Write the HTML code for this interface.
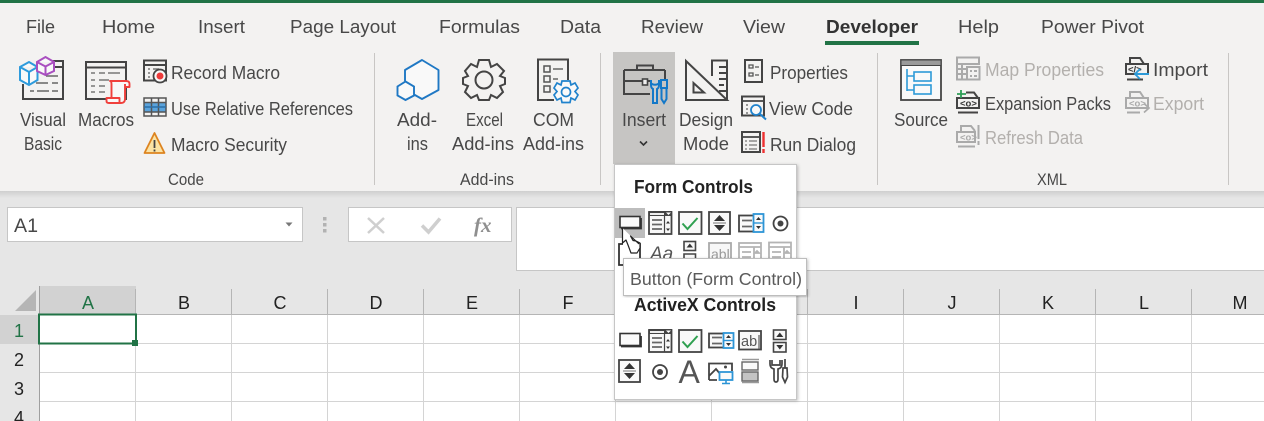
<!DOCTYPE html>
<html><head><meta charset="utf-8"><title>Excel Developer Ribbon</title>
<style>
html,body{margin:0;padding:0;width:1264px;height:421px;overflow:hidden;background:#e6e6e6}
svg{display:block}
text{font-family:"Liberation Sans",sans-serif;font-size:18.5px;fill:#484848;}
.g{fill:#b3b0ad}
.s{font-size:16.5px;fill:#484848}
.b{font-weight:bold;fill:#222;font-size:18px}
.h{fill:#222;font-size:18px}
.d{stroke:#444;stroke-width:2;fill:none}
.y{stroke:#aaa;stroke-width:2;fill:none}
</style></head><body>
<svg width="1264" height="421" viewBox="0 0 1264 421" xmlns="http://www.w3.org/2000/svg">
<defs>
<linearGradient id="sh" x1="0" y1="0" x2="0" y2="1"><stop offset="0" stop-color="#cfcfcf"/><stop offset="1" stop-color="#e6e6e6"/></linearGradient>
<filter id="ms" x="-5%" y="-5%" width="110%" height="110%"><feDropShadow dx="1" dy="1" stdDeviation="1.5" flood-color="#000" flood-opacity=".25"/></filter>
</defs>
<rect width="1264" height="421" fill="#e6e6e6"/>
<rect width="1264" height="191" fill="#f3f2f1"/>
<rect y="191" width="1264" height="7" fill="url(#sh)"/>
<rect width="1264" height="3" fill="#217346"/>

<!-- tabs -->
<text x="26" y="33" textLength="29" lengthAdjust="spacingAndGlyphs">File</text>
<text x="102" y="33" textLength="53" lengthAdjust="spacingAndGlyphs">Home</text>
<text x="198" y="33" textLength="47" lengthAdjust="spacingAndGlyphs">Insert</text>
<text x="290" y="33" textLength="106" lengthAdjust="spacingAndGlyphs">Page Layout</text>
<text x="439" y="33" textLength="81" lengthAdjust="spacingAndGlyphs">Formulas</text>
<text x="560" y="33" textLength="41" lengthAdjust="spacingAndGlyphs">Data</text>
<text x="641" y="33" textLength="62" lengthAdjust="spacingAndGlyphs">Review</text>
<text x="743" y="33" textLength="42" lengthAdjust="spacingAndGlyphs">View</text>
<text x="826" y="33" textLength="92" lengthAdjust="spacingAndGlyphs" style="font-weight:bold;fill:#333">Developer</text>
<rect x="825" y="41" width="94" height="4" fill="#217346"/>
<text x="958" y="33" textLength="41" lengthAdjust="spacingAndGlyphs">Help</text>
<text x="1041" y="33" textLength="103" lengthAdjust="spacingAndGlyphs">Power Pivot</text>

<!-- separators -->
<g fill="#c8c6c4"><rect x="374" y="53" width="1" height="132"/><rect x="600" y="53" width="1" height="132"/><rect x="877" y="53" width="1" height="132"/><rect x="1228" y="53" width="1" height="132"/></g>

<!-- Insert highlight -->
<rect x="613" y="52" width="62" height="112" fill="#c6c5c3"/>

<!-- Code group text -->
<text x="20" y="126" textLength="46" lengthAdjust="spacingAndGlyphs">Visual</text>
<text x="24" y="150" textLength="38" lengthAdjust="spacingAndGlyphs">Basic</text>
<text x="78" y="126" textLength="56" lengthAdjust="spacingAndGlyphs">Macros</text>
<text x="171" y="79" textLength="109" lengthAdjust="spacingAndGlyphs">Record Macro</text>
<text x="171" y="115" textLength="182" lengthAdjust="spacingAndGlyphs">Use Relative References</text>
<text x="171" y="151" textLength="116" lengthAdjust="spacingAndGlyphs">Macro Security</text>
<text class="s" x="168" y="185" textLength="36" lengthAdjust="spacingAndGlyphs">Code</text>

<!-- Add-ins group text -->
<text x="397" y="126" textLength="40" lengthAdjust="spacingAndGlyphs">Add-</text>
<text x="407" y="150" textLength="21" lengthAdjust="spacingAndGlyphs">ins</text>
<text x="466" y="126" textLength="37" lengthAdjust="spacingAndGlyphs">Excel</text>
<text x="452" y="150" textLength="62" lengthAdjust="spacingAndGlyphs">Add-ins</text>
<text x="533" y="126" textLength="41" lengthAdjust="spacingAndGlyphs">COM</text>
<text x="523" y="150" textLength="61" lengthAdjust="spacingAndGlyphs">Add-ins</text>
<text class="s" x="460" y="185" textLength="54" lengthAdjust="spacingAndGlyphs">Add-ins</text>

<!-- Controls text -->
<text x="622" y="126" textLength="44" lengthAdjust="spacingAndGlyphs">Insert</text>
<path d="M640 141.500l3.500 3.500 3.500-3.500" stroke="#333" stroke-width="1.600" fill="none"/>
<text x="679" y="126" textLength="54" lengthAdjust="spacingAndGlyphs">Design</text>
<text x="683" y="150" textLength="46" lengthAdjust="spacingAndGlyphs">Mode</text>
<text x="770" y="79" textLength="78" lengthAdjust="spacingAndGlyphs">Properties</text>
<text x="769" y="115" textLength="84" lengthAdjust="spacingAndGlyphs">View Code</text>
<text x="770" y="151" textLength="86" lengthAdjust="spacingAndGlyphs">Run Dialog</text>

<!-- XML text -->
<text x="894" y="126" textLength="54" lengthAdjust="spacingAndGlyphs">Source</text>
<text class="g" x="985" y="76" textLength="119" lengthAdjust="spacingAndGlyphs">Map Properties</text>
<text x="985" y="110" textLength="126" lengthAdjust="spacingAndGlyphs">Expansion Packs</text>
<text class="g" x="985" y="144" textLength="98" lengthAdjust="spacingAndGlyphs">Refresh Data</text>
<text x="1153" y="76" textLength="55" lengthAdjust="spacingAndGlyphs">Import</text>
<text class="g" x="1153" y="110" textLength="51" lengthAdjust="spacingAndGlyphs">Export</text>
<text class="s" x="1037" y="185" textLength="30" lengthAdjust="spacingAndGlyphs">XML</text>

<!-- Visual Basic icon -->
<path class="d" d="M52 61H63V99H23V84"/><path d="M54 67H62" stroke="#444" stroke-width="2"/>
<path d="M36 83h12M52 83h6M46 76h12M30 91h4M37 91h12M52 91h6" stroke="#666" stroke-width="1.600" fill="none"/>
<path d="M20 67L29 62L37.500 67V80L29 85L20 80ZM20 67L29 72L37.500 67M29 72V85" stroke="#2e9bdc" stroke-width="2" fill="#f9f9f9"/>
<path d="M37 62L45.500 57L54 62V71L45.500 75L37 71ZM37 62L45.500 66.500L54 62M45.500 66.500V75" stroke="#a94fc0" stroke-width="2" fill="#f9f9f9"/>

<!-- Macros icon -->
<rect class="d" x="86" y="62" width="40" height="37"/><path d="M86 67.500H126" stroke="#444" stroke-width="2"/>
<path d="M91 73h4M99 73h6M108 73h12M91 80h4M99 80h10M91 86h4M99 86h6M91 92h4M99 92h6" stroke="#777" stroke-width="1.600"/>
<path d="M110 81H126Q129.500 81 129.500 84V87H125V99Q125 103 121 103H109Q106.500 103 106.500 101V98H111.500V84Q111.500 81 110 81ZM111.500 98H119.500V102.500M125 84V87" stroke="#f0403c" stroke-width="1.900" fill="#f8f8f8" stroke-linejoin="round"/>

<!-- Record Macro icon -->
<rect class="d" x="144" y="60.500" width="22" height="20"/><path d="M144 65H166" stroke="#444" stroke-width="2"/>
<path d="M148 69h2M153 69h6M148 73h2M148 77h2" stroke="#777" stroke-width="1.400"/>
<circle cx="160" cy="76" r="6.500" fill="#f8f8f8" stroke="#444" stroke-width="1.800"/><circle cx="160" cy="76" r="3.500" fill="#ee3b3b"/>

<!-- relative ref -->
<rect x="144" y="102" width="22" height="10" fill="#5aa3dc"/>
<path d="M144 98H166V116H144ZM144 112H166M151.500 98V116M158.500 98V116M144 102.500H166" stroke="#555" stroke-width="1.500" fill="none"/>
<path d="M144 107H166" stroke="#2a6fa8" stroke-width="1.500"/>

<!-- warning -->
<path d="M154.500 133L144.500 153H164.500Z" fill="#fbe3a4" stroke="#dd8420" stroke-width="1.800" stroke-linejoin="round"/>
<path d="M154.500 140V148M154.500 149.500V151.500" stroke="#444" stroke-width="1.800"/>

<!-- Add-ins hexagon -->
<path d="M405 81V70L422 60L438.500 70V90L422 99L414 94.500" stroke="#1f78c4" stroke-width="1.900" fill="#f9f9f9" stroke-linejoin="round"/>
<path d="M405.500 81.500L414 86.500V95.500L405.500 100L397.500 95.500V86.500Z" stroke="#1f78c4" stroke-width="1.900" fill="#f9f9f9"/>

<!-- Gear -->
<path class="d" stroke-width="1.800" d="M479 60H489L491 67L497 64L504 71L500 76L505 78V84L500 86L503 92L497 98L491 95L489 100H479L477 95L471 98L465 92L468 86L463 84V78L468 76L465 71L471 64L477 67Z"/>
<circle cx="484" cy="80" r="8.500" class="d" stroke-width="1.800"/>

<!-- COM -->
<path class="d" d="M568 80V59.500H538V100H554" stroke-width="1.800"/>
<path d="M544 66h6v6h-6zM544 76h6v6h-6zM544 86h6v6h-6z" stroke="#555" stroke-width="1.500" fill="none"/>
<path d="M553 69h10M553 79h5" stroke="#666" stroke-width="1.600"/>
<path fill="#f9f9f9" stroke="#1f82cc" stroke-width="1.700" d="M562 81H570L571 85L575 83L578 88L575 91.500L578 95L575 100L571 98L570 102.500H562L561 98L557 100L554 95L557 91.500L554 88L557 83L561 85Z"/>
<circle cx="566" cy="92" r="4.500" fill="none" stroke="#1f82cc" stroke-width="1.700"/>

<!-- Insert toolbox -->
<path class="d" d="M624 70H665M624 70V94H650M665 70V79M624 81H642M647 81H650M637 70V65.500H653V70" stroke-width="1.800"/>
<rect x="642.500" y="79" width="5" height="6" fill="#eee" stroke="#444" stroke-width="1.600"/>
<path d="M651 80V85Q651 88 653 89V103H657V89Q659 88 659 85V80M651 83.500Q655 86 659 83.500" fill="#cfd9e0" fill-opacity=".4" stroke="#1378c8" stroke-width="2"/>
<path d="M661 80H667V88H661ZM661.500 88V99L664 103L666.500 99V88" fill="none" stroke="#1378c8" stroke-width="2"/>

<!-- Design Mode -->
<path class="d" d="M686 61V100H727ZM693.500 83V92.500H704Z" stroke-width="1.800"/>
<path class="d" stroke-width="1.800" d="M712 76V60.500H727V100M719 67h8M719 73h8M719 79h8M719 85h5M719 91h8"/>

<!-- Properties -->
<rect class="d" x="745" y="60" width="17" height="22" stroke-width="1.800"/><path d="M749 65h4v3h-4zM749 73h4v3h-4zM755 67h4M755 75h4" stroke="#555" stroke-width="1.300" fill="none"/>

<!-- View code -->
<rect class="d" x="742" y="96.500" width="22" height="19" stroke-width="1.800"/><path d="M742 101H764" stroke="#444" stroke-width="1.800"/>
<path d="M746 105h2M746 109h2M746 113h2" stroke="#777" stroke-width="1.400"/>
<circle cx="756" cy="110" r="5" fill="#f8f8f8" stroke="#1f82cc" stroke-width="1.800"/><path d="M760 114l6 5.500" stroke="#1f82cc" stroke-width="2"/>

<!-- Run dialog -->
<rect class="d" x="742" y="132" width="18" height="20" stroke-width="1.800"/><path d="M742 137H760" stroke="#444" stroke-width="1.800"/>
<path d="M745 141h2M749 141h8M745 145h2M749 145h8M745 149h2M749 149h8" stroke="#777" stroke-width="1.300"/>
<path d="M763.500 132V147M763.500 149V153" stroke="#ee3030" stroke-width="2.400"/>

<!-- Source -->
<rect x="901" y="60" width="40" height="40" fill="#f9f9f9" stroke="#444" stroke-width="1.800"/>
<rect x="901" y="60" width="40" height="5.500" fill="#9a9a9a" stroke="#444" stroke-width="1"/>
<path d="M907 69V91M907 76H914M907 90H914" stroke="#2d9ad8" stroke-width="1.600" fill="none"/>
<rect x="914" y="72" width="17" height="9" fill="none" stroke="#2d9ad8" stroke-width="1.600"/>
<rect x="914" y="85" width="17" height="9" fill="none" stroke="#2d9ad8" stroke-width="1.600"/>

<!-- Map props -->
<path class="y" stroke-width="1.600" d="M957 57.500H979V64H957ZM957 64V79.500H967M957 69H967M957 74H967M962 64V79.500"/>
<rect class="y" x="967" y="67" width="12.500" height="12.500" stroke-width="1.500"/>
<path d="M970 70h2v2h-2zM970 75h2v2h-2zM974 70h3v2h-3zM974 75h3v2h-3z" fill="#aaa"/>

<!-- Expansion packs -->
<path class="d" stroke-width="1.600" d="M957 98H979V108H957ZM958 112.500H978M966 92.500H974L978 98"/>
<text x="960" y="106.500" style="font-size:9.500px;font-weight:bold;fill:#333">&lt;o&gt;</text>
<path d="M961 90V98M957 94H966" stroke="#2f9e57" stroke-width="1.800"/>

<!-- Refresh -->
<path class="y" stroke-width="1.600" d="M957 132H975V142H957ZM958 146.500H975M961 132V126H971L975 131"/>
<text x="960" y="140.500" style="font-size:9.500px;font-weight:bold;fill:#aaa">&lt;o&gt;</text>
<path d="M978.500 125V139M978.500 141V145" stroke="#aaa" stroke-width="2"/>

<!-- Import -->
<path class="d" stroke-width="1.600" d="M1126 64H1148V74H1126ZM1127 79.500H1143M1130 64V58H1140L1144 64"/>
<text x="1128" y="72.500" style="font-size:9.500px;font-weight:bold;fill:#333">&lt;/&gt;</text>
<path d="M1149 74H1135M1140 69L1135 74L1140 79" stroke="#2d9ad8" stroke-width="1.900" fill="none"/>

<!-- Export -->
<path class="y" stroke-width="1.600" d="M1126 98H1148V108H1126ZM1127 112.500H1140M1130 98V92H1140L1144 98"/>
<text x="1129" y="106.500" style="font-size:9.500px;font-weight:bold;fill:#aaa">&lt;o&gt;</text>
<path d="M1134 108H1148M1144 103.500L1149 108L1144 112.500" stroke="#aaa" stroke-width="1.700" fill="none"/>

<!-- Formula bar -->
<rect x="7.500" y="207.500" width="295" height="34" fill="#fff" stroke="#c6c6c6"/>
<text x="14" y="232" textLength="24" lengthAdjust="spacingAndGlyphs" style="font-size:19px">A1</text>
<path d="M285.500 222.500h7l-3.500 4z" fill="#777"/>
<g fill="#b2b2b2"><rect x="323" y="217" width="3.500" height="3.500"/><rect x="323" y="223" width="3.500" height="3.500"/><rect x="323" y="229" width="3.500" height="3.500"/></g>
<rect x="348.500" y="207.500" width="163" height="34" fill="#fff" stroke="#c6c6c6"/>
<path d="M368 218L384 233M384 218L368 233" stroke="#cfcfcf" stroke-width="2.500"/>
<path d="M422 225.500L428.500 232L440 218.500" stroke="#cfcfcf" stroke-width="3.500" fill="none"/>
<text x="474" y="232" style="font-family:'Liberation Serif',serif;font-style:italic;font-weight:bold;font-size:21px;fill:#8f8f8f">fx</text>
<rect x="516.500" y="207.500" width="760" height="63" fill="#fff" stroke="#c6c6c6"/>

<!-- Grid -->
<rect x="40" y="315" width="1224" height="106" fill="#fff"/>
<rect x="0" y="315" width="39" height="106" fill="#e6e6e6"/>
<rect x="39" y="286" width="1225" height="28" fill="#e6e6e6"/>
<rect x="39" y="286" width="97" height="28" fill="#d2d2d2"/>
<rect x="0" y="315" width="39" height="29" fill="#d2d2d2"/>
<path d="M36 290V311H15Z" fill="#b5b5b5"/>
<g fill="#d4d4d4">
<rect x="135" y="315" width="1" height="106"/><rect x="231" y="315" width="1" height="106"/><rect x="327" y="315" width="1" height="106"/><rect x="423" y="315" width="1" height="106"/><rect x="519" y="315" width="1" height="106"/><rect x="615" y="315" width="1" height="106"/><rect x="711" y="315" width="1" height="106"/><rect x="807" y="315" width="1" height="106"/><rect x="903" y="315" width="1" height="106"/><rect x="999" y="315" width="1" height="106"/><rect x="1095" y="315" width="1" height="106"/><rect x="1191" y="315" width="1" height="106"/>
<rect x="39" y="343" width="1225" height="1"/><rect x="39" y="372" width="1225" height="1"/><rect x="39" y="401" width="1225" height="1"/>
</g>
<g fill="#b5b5b5">
<rect x="135" y="289" width="1" height="25"/><rect x="231" y="289" width="1" height="25"/><rect x="327" y="289" width="1" height="25"/><rect x="423" y="289" width="1" height="25"/><rect x="519" y="289" width="1" height="25"/><rect x="615" y="289" width="1" height="25"/><rect x="711" y="289" width="1" height="25"/><rect x="807" y="289" width="1" height="25"/><rect x="903" y="289" width="1" height="25"/><rect x="999" y="289" width="1" height="25"/><rect x="1095" y="289" width="1" height="25"/><rect x="1191" y="289" width="1" height="25"/>
<rect x="39" y="314" width="1225" height="1"/><rect x="39" y="286" width="1" height="135" fill="#9f9f9f"/>
</g>
<g text-anchor="middle">
<text x="88" y="309" style="fill:#217346;font-size:18px">A</text>
<text class="h" x="184" y="309">B</text><text class="h" x="280" y="309">C</text><text class="h" x="376" y="309">D</text><text class="h" x="472" y="309">E</text><text class="h" x="568" y="309">F</text>
<text class="h" x="856" y="309">I</text><text class="h" x="952" y="309">J</text><text class="h" x="1048" y="309">K</text><text class="h" x="1144" y="309">L</text><text class="h" x="1240" y="309">M</text>
<text x="19" y="337" style="fill:#217346;font-size:18px">1</text>
<text class="h" x="19" y="366">2</text><text class="h" x="19" y="395">3</text><text class="h" x="19" y="424">4</text>
</g>
<rect x="39" y="314.500" width="97" height="29" fill="#fff" stroke="#217346" stroke-width="2"/>
<rect x="132" y="340" width="6" height="6" fill="#217346"/>

<!-- Dropdown -->
<rect x="614.500" y="164.500" width="182" height="235" fill="#fff" stroke="#c6c6c6" filter="url(#ms)"/>
<text class="b" x="634" y="193" textLength="119" lengthAdjust="spacingAndGlyphs">Form Controls</text>
<text class="b" x="634" y="311" textLength="142" lengthAdjust="spacingAndGlyphs">ActiveX Controls</text>

<!-- Row 1 -->
<rect x="615" y="208" width="30" height="30" fill="#bdbdbd"/>
<rect x="620" y="216.500" width="20" height="11" fill="#fafafa" stroke="#333" stroke-width="1.600"/><path d="M621 228.500H641V218" stroke="#333" stroke-width="1.800" fill="none"/>

<rect x="649" y="212" width="22.500" height="22" fill="#f8f8f8" stroke="#444" stroke-width="1.800"/>
<rect x="649" y="211" width="23" height="5" fill="#444"/>
<path d="M650 213h14v2h-14z" fill="#eee"/><path d="M666 212.500h5l-2.500 2.500z" fill="#fff"/>
<path d="M664.500 216V234" stroke="#444" stroke-width="1.200"/>
<path d="M652 220h10M652 224.500h10M652 229h10" stroke="#666" stroke-width="1.800"/>
<path d="M668 221l-2 2.500h4zM668 231l-2-2.500h4z" fill="#333"/>
<rect x="679" y="212" width="22.500" height="22" fill="#f9f9f9" stroke="#444" stroke-width="1.800"/>
<path d="M682.500 223.500l5 5.500 10-11" stroke="#2fa050" stroke-width="2" fill="none"/>
<rect x="709" y="212" width="21" height="22" fill="#f9f9f9" stroke="#444" stroke-width="1.800"/>
<path d="M714 221h11l-5.500-6zM714 225h11l-5.500 6z" fill="#333"/><path d="M713 223h13" stroke="#777" stroke-width="1"/>
<rect x="739" y="215.500" width="17" height="16" fill="#f9f9f9" stroke="#444" stroke-width="1.800"/>
<path d="M742 220.500h10M742 226.500h10" stroke="#666" stroke-width="1.800"/>
<rect x="753.500" y="214" width="10" height="18" fill="#f9f9f9" stroke="#2d95d6" stroke-width="1.800"/><path d="M753.500 223H763.500" stroke="#2d95d6" stroke-width="1.400"/>
<path d="M758.500 217l-2.500 3h5zM758.500 229l-2.500-3h5z" fill="#333"/>
<circle cx="780.500" cy="223.500" r="7" fill="#fff" stroke="#444" stroke-width="1.800"/><circle cx="780.500" cy="223.500" r="3" fill="#444"/>

<!-- Row 2 -->
<path d="M623 244H619V265H640V244H636" stroke="#333" stroke-width="1.800" fill="none"/>
<text x="650" y="260" style="font-style:italic;font-size:19px;fill:#555">Aa</text>
<rect x="684" y="241.500" width="11.500" height="9" fill="#f8f8f8" stroke="#444" stroke-width="1.600"/><path d="M689.800 243.500l-3.200 4h6.400z" fill="#333"/>
<path d="M684 254H695.500V262H684Z" fill="#f8f8f8" stroke="#444" stroke-width="1.600"/>
<rect x="709" y="243" width="22" height="20" fill="#f7f7f7" stroke="#aaa" stroke-width="1.800"/><text x="711" y="259" style="font-size:14px;fill:#999">abl</text>
<g stroke="#b4b4b4" fill="none" stroke-width="1.800"><rect x="739" y="243" width="22" height="20"/><path d="M739 247H761M754 247V263M742 252H751M742 257H751"/><path d="M757 251l-2 2h4z" fill="#aaa"/></g>
<g stroke="#b4b4b4" fill="none" stroke-width="1.800"><rect x="769" y="242.500" width="22" height="20"/><path d="M769 247H791M784 247V263M772 252H781M772 257H781"/><path d="M787 251l-2 2h4z" fill="#aaa"/></g>

<!-- Tooltip -->
<rect x="623.500" y="258.500" width="183" height="37" fill="#fff" stroke="#bdbdbd" filter="url(#ms)"/>
<text x="630" y="285" textLength="172" lengthAdjust="spacingAndGlyphs" style="fill:#5a5a5a;font-size:17.500px">Button (Form Control)</text>

<!-- Cursor -->
<path d="M622.500 228V243L626 240L628 245L631 253H637L640 248V243L636 241L633 240.500L630.500 236L639 244" fill="#fff" stroke="#222" stroke-width="1.200" stroke-linejoin="round"/>

<!-- Row 3 -->
<rect x="620" y="333.500" width="20" height="12" fill="#fafafa" stroke="#333" stroke-width="1.600"/><path d="M621 346.500H641V336" stroke="#333" stroke-width="1.800" fill="none"/>
<rect x="649" y="330" width="22.500" height="22" fill="#f8f8f8" stroke="#444" stroke-width="1.800"/>
<rect x="649" y="329" width="23" height="5" fill="#444"/>
<path d="M650 331h14v2h-14z" fill="#eee"/><path d="M666 330.500h5l-2.500 2.500z" fill="#fff"/>
<path d="M664.500 334V352" stroke="#444" stroke-width="1.200"/>
<path d="M652 338h10M652 342.500h10M652 347h10" stroke="#666" stroke-width="1.800"/>
<path d="M668 339l-2 2.500h4zM668 349l-2-2.500h4z" fill="#333"/>
<rect x="679" y="330" width="22.500" height="22" fill="#f9f9f9" stroke="#444" stroke-width="1.800"/>
<path d="M682.500 341.500l5 5.500 10-11" stroke="#2fa050" stroke-width="2" fill="none"/>
<rect x="709" y="333.500" width="16" height="14" fill="#f9f9f9" stroke="#444" stroke-width="1.800"/>
<path d="M712 337.500h10M712 343.500h10" stroke="#666" stroke-width="1.800"/>
<rect x="723.500" y="333" width="10" height="15" fill="#f9f9f9" stroke="#2d95d6" stroke-width="1.800"/><path d="M723.500 340.500H733.500" stroke="#2d95d6" stroke-width="1.400"/>
<path d="M728.500 335l-2.500 3h5zM728.500 346l-2.500-3h5z" fill="#333"/>
<rect x="739" y="331" width="22" height="18.500" fill="#f7f7f7" stroke="#444" stroke-width="1.800"/><text x="741" y="346" style="font-size:14.500px;fill:#555">ab|</text>
<rect x="773.500" y="330" width="12.500" height="9.500" fill="#f8f8f8" stroke="#444" stroke-width="1.600"/><path d="M779.800 332.500l-3.500 4.500h7z" fill="#333"/>
<rect x="773.500" y="342.500" width="12.500" height="9.500" fill="#f8f8f8" stroke="#444" stroke-width="1.600"/><path d="M779.800 349.500l-3.500-4.500h7z" fill="#333"/>

<!-- Row 4 -->
<rect x="619" y="360" width="21" height="22" fill="#f9f9f9" stroke="#444" stroke-width="1.800"/>
<path d="M624 369h11l-5.500-6zM624 373h11l-5.500 6z" fill="#333"/><path d="M623 371h13" stroke="#777" stroke-width="1"/>
<circle cx="660" cy="372" r="7" fill="#fff" stroke="#444" stroke-width="1.800"/><circle cx="660" cy="372" r="3" fill="#444"/>
<text x="678.500" y="383" style="font-size:32px;fill:#555">A</text>
<path d="M709 380V363.500H732V371M709 380H717M709 376L716 369L721 375" stroke="#444" stroke-width="1.800" fill="none"/>
<circle cx="725.500" cy="367" r="1.500" fill="#444"/>
<rect x="719.500" y="372" width="13" height="8" fill="#f9f9f9" stroke="#2d95d6" stroke-width="1.800"/><path d="M726 380V383M722 383.500H730" stroke="#2d95d6" stroke-width="1.600"/>
<g stroke="#666" stroke-width="1.400"><path d="M742 359.500H759" stroke="#999"/><rect x="742" y="362" width="16" height="8" fill="#fafafa"/><rect x="742" y="372" width="16" height="9" fill="#c4c4c4"/><path d="M742 382.500H759" stroke="#999"/></g>
<path d="M771 360V364Q771 368 775 369V379Q775 382 777 382Q779 382 779 379V369Q783 368 783 364V360M773 360V365H781V360M786 359V368M784 368H788L788.500 377L786 382.500L783.500 377Z" transform="translate(-1,0)" stroke="#444" stroke-width="1.700" fill="none"/>
</svg>
</body></html>
